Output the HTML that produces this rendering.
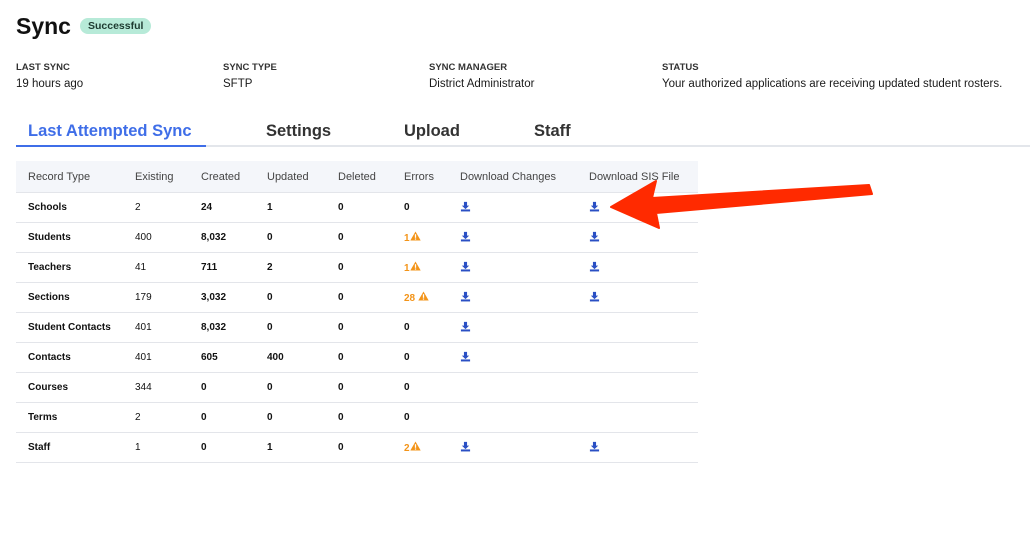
<!DOCTYPE html><html><head><style>
body{margin:0;background:#fff;font-family:"Liberation Sans",sans-serif;color:#1a1a1a;width:1036px;height:535px;overflow:hidden;position:relative}
.a{position:absolute;white-space:nowrap}
h1{position:absolute;left:16px;top:13px;margin:0;font-size:23px;font-weight:600;color:#111}
.badge{position:absolute;left:80px;top:18px;background:#b7ead8;color:#1d3a30;font-size:10.5px;font-weight:bold;padding:2px 8px;border-radius:9px}
.lbl{font-size:9.5px;font-weight:bold;color:#333;top:62px}
.val{font-size:11.5px;top:78px}
.tab{font-size:16.5px;font-weight:bold;color:#333;top:122px}
table{position:absolute;left:16px;top:161px;border-collapse:collapse;font-size:10px;width:682px}
td{height:29px;border-bottom:1px solid #e3e5ea;padding:0;font-weight:bold;color:#111}
tr.h td{background:#f4f6fa;font-weight:normal;font-size:11px;color:#444;height:31px}
td:first-child{padding-left:12px}
td.n{font-weight:normal}
.o{color:#f39419}
</style></head><body>
<h1>Sync</h1><div class="badge">Successful</div>
<div class="a lbl" style="left:16px">LAST SYNC</div><div class="a val" style="left:16px">19 hours ago</div>
<div class="a lbl" style="left:223px">SYNC TYPE</div><div class="a val" style="left:223px">SFTP</div>
<div class="a lbl" style="left:429px">SYNC MANAGER</div><div class="a val" style="left:429px">District Administrator</div>
<div class="a lbl" style="left:662px">STATUS</div><div class="a val" style="left:662px">Your authorized applications are receiving updated student rosters.</div>
<div class="a tab" style="left:28px;color:#3f6ee8">Last Attempted Sync</div>
<div class="a tab" style="left:266px">Settings</div>
<div class="a tab" style="left:404px">Upload</div>
<div class="a tab" style="left:534px">Staff</div>
<div class="a" style="left:16px;top:145px;width:1014px;height:2px;background:#e3e6eb"></div>
<div class="a" style="left:16px;top:145px;width:190px;height:2px;background:#3f6ee8"></div>
<svg width="0" height="0" style="position:absolute"><defs>
<symbol id="d" viewBox="0 0 12 12"><path d="M4.3 1h3.4v4h2.3L6 8.8 2 5h2.3z" fill="#2a4fc4"/><rect x="1" y="9.2" width="10" height="2.2" fill="#2a4fc4"/></symbol>
<symbol id="w" viewBox="0 0 12 11"><path d="M6 .5L11.7 10.5H.3z" fill="#f39419"/><rect x="5.3" y="3.5" width="1.4" height="4" fill="#fff"/><rect x="5.3" y="8.2" width="1.4" height="1.3" fill="#fff"/></symbol></defs></svg>
<table>
<colgroup><col style="width:119px"><col style="width:66px"><col style="width:66px"><col style="width:71px"><col style="width:66px"><col style="width:56px"><col style="width:129px"><col></colgroup>
<tr class="h"><td>Record Type</td><td>Existing</td><td>Created</td><td>Updated</td><td>Deleted</td><td>Errors</td><td>Download Changes</td><td>Download SIS File</td></tr>
<tr><td>Schools</td><td class="n">2</td><td>24</td><td>1</td><td>0</td><td>0</td><td><svg width="11" height="11"><use href="#d"/></svg></td><td><svg width="11" height="11"><use href="#d"/></svg></td></tr>
<tr><td>Students</td><td class="n">400</td><td>8,032</td><td>0</td><td>0</td><td class="o">1<svg width="11" height="10"><use href="#w"/></svg></td><td><svg width="11" height="11"><use href="#d"/></svg></td><td><svg width="11" height="11"><use href="#d"/></svg></td></tr>
<tr><td>Teachers</td><td class="n">41</td><td>711</td><td>2</td><td>0</td><td class="o">1<svg width="11" height="10"><use href="#w"/></svg></td><td><svg width="11" height="11"><use href="#d"/></svg></td><td><svg width="11" height="11"><use href="#d"/></svg></td></tr>
<tr><td>Sections</td><td class="n">179</td><td>3,032</td><td>0</td><td>0</td><td class="o">28 <svg width="11" height="10"><use href="#w"/></svg></td><td><svg width="11" height="11"><use href="#d"/></svg></td><td><svg width="11" height="11"><use href="#d"/></svg></td></tr>
<tr><td>Student Contacts</td><td class="n">401</td><td>8,032</td><td>0</td><td>0</td><td>0</td><td><svg width="11" height="11"><use href="#d"/></svg></td><td></td></tr>
<tr><td>Contacts</td><td class="n">401</td><td>605</td><td>400</td><td>0</td><td>0</td><td><svg width="11" height="11"><use href="#d"/></svg></td><td></td></tr>
<tr><td>Courses</td><td class="n">344</td><td>0</td><td>0</td><td>0</td><td>0</td><td></td><td></td></tr>
<tr><td>Terms</td><td class="n">2</td><td>0</td><td>0</td><td>0</td><td>0</td><td></td><td></td></tr>
<tr><td>Staff</td><td class="n">1</td><td>0</td><td>1</td><td>0</td><td class="o">2<svg width="11" height="10"><use href="#w"/></svg></td><td><svg width="11" height="11"><use href="#d"/></svg></td><td><svg width="11" height="11"><use href="#d"/></svg></td></tr>
</table>
<svg class="a" style="left:0;top:0" width="1036" height="535"><polygon points="611,207 656,181 652,198 869,185 872,194 656,213 659,228" fill="#ff2a00" stroke="#ff2a00" stroke-width="2" stroke-linejoin="round"/></svg>
</body></html>
